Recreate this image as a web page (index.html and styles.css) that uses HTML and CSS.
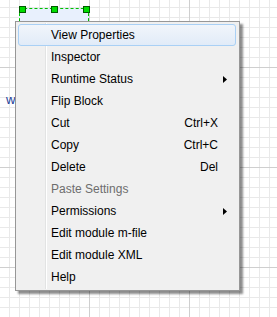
FILE: index.html
```html
<!DOCTYPE html>
<html>
<head>
<meta charset="utf-8">
<link rel="stylesheet" href="styles.css">
</head>
<body>
<div class="canvas">
  <div class="block"></div>
  <div class="handle h1"></div>
  <div class="handle h2"></div>
  <div class="handle h3"></div>
  <div class="label">w</div>

  <div class="menu">
    <div class="item hot"><span class="text">View Properties</span></div>
    <div class="item"><span class="text">Inspector</span></div>
    <div class="item"><span class="text">Runtime Status</span><span class="arrow"><svg width="4" height="7" viewBox="0 0 4 7"><polygon points="0,0 4,3.5 0,7" fill="#000"/></svg></span></div>
    <div class="item"><span class="text">Flip Block</span></div>
    <div class="item"><span class="text">Cut</span><span class="key">Ctrl+X</span></div>
    <div class="item"><span class="text">Copy</span><span class="key">Ctrl+C</span></div>
    <div class="item"><span class="text">Delete</span><span class="key">Del</span></div>
    <div class="item disabled"><span class="text">Paste Settings</span></div>
    <div class="item"><span class="text">Permissions</span><span class="arrow"><svg width="4" height="7" viewBox="0 0 4 7"><polygon points="0,0 4,3.5 0,7" fill="#000"/></svg></span></div>
    <div class="item"><span class="text">Edit module m-file</span></div>
    <div class="item"><span class="text">Edit module XML</span></div>
    <div class="item"><span class="text">Help</span></div>
  </div>
</div>
</body>
</html>
```
FILE: styles.css
```css
html, body {
  margin: 0;
  padding: 0;
}
body {
  width: 277px;
  height: 317px;
  overflow: hidden;
  background-color: #ffffff;
  background-image:
    linear-gradient(to right, #cfcfcf 1px, transparent 1px),
    linear-gradient(to bottom, #cfcfcf 1px, transparent 1px),
    linear-gradient(to right, #e9e9e9 1px, transparent 1px),
    linear-gradient(to bottom, #e9e9e9 1px, transparent 1px);
  background-size: 100px 100%, 100% 100px, 10px 100%, 100% 10px;
  background-position: 89px 0, 0 67px, 9px 0, 0 7px;
  font-family: "Liberation Sans", Arial, sans-serif;
}
.canvas {
  position: relative;
  width: 277px;
  height: 317px;
}
.block {
  position: absolute;
  left: 19px;
  top: 8px;
  width: 70px;
  height: 140px;
  box-sizing: border-box;
  background: #e8f0fd;
  border: 1px dashed #00c000;
}
.handle {
  position: absolute;
  top: 6px;
  width: 7px;
  height: 7px;
  box-sizing: border-box;
  background: #00dd00;
  border: 1px solid #005a00;
}
.h1 { left: 19px; }
.h2 { left: 51px; }
.h3 { left: 83px; }
.label {
  position: absolute;
  left: 6px;
  top: 92px;
  font-size: 13px;
  color: #22409a;
}
.menu {
  position: absolute;
  left: 15px;
  top: 21px;
  width: 225px;
  height: 270px;
  box-sizing: border-box;
  padding: 2px 3px 1px 2px;
  background: #f0f0f0;
  border: 1px solid #979797;
  box-shadow: 3px 3px 2px rgba(0, 0, 0, 0.45);
}
.menu::before {
  content: "";
  position: absolute;
  left: 29px;
  top: 1px;
  bottom: 1px;
  width: 1px;
  background: #e2e3e3;
  border-right: 1px solid #ffffff;
}
.item {
  position: relative;
  display: flex;
  align-items: center;
  height: 22px;
  box-sizing: border-box;
  padding-left: 32px;
  font-size: 12px;
  color: #000000;
  border: 1px solid transparent;
  border-radius: 3px;
}
.item.hot {
  border-color: #a9d0f5;
  background: linear-gradient(to bottom, #f1f5fb, #e1ebf8);
}
.item.disabled {
  color: #6d6d6d;
}
.text {
  flex: 1;
  white-space: nowrap;
}
.key {
  margin-right: 17px;
  white-space: nowrap;
}
.arrow {
  display: flex;
  margin-right: 8px;
}
.arrow svg {
  display: block;
}
```
